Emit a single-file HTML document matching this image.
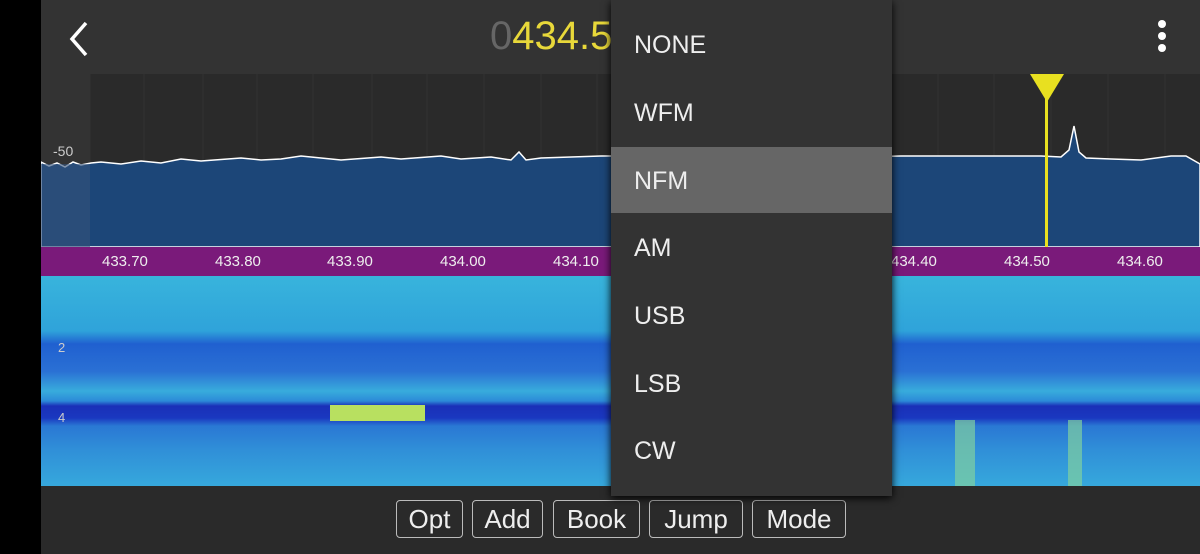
<!DOCTYPE html><html><head><style>
body{margin:0;width:1200px;height:554px;background:#000;overflow:hidden;position:relative;font-family:"Liberation Sans",sans-serif}
.a{position:absolute}
.b{position:absolute;top:500px;height:38px;border:1.5px solid #bbb;border-radius:4px;box-sizing:border-box;font-size:26px;color:#eee;text-align:center;line-height:36px}
</style></head><body>
<div class="a" style="left:41px;top:0;width:1159px;height:74px;background:#333"></div>
<svg class="a" style="left:64px;top:20px" width="30" height="38"><path d="M22 3 L8 19 L22 35" stroke="#fff" stroke-width="3.5" fill="none"/></svg>
<div class="a" style="left:490px;top:14px;font-size:40px;color:#666">0<span style="color:#e8d83a">434.5</span></div>
<div class="a" style="left:1158px;top:20px;width:8px;height:8px;border-radius:50%;background:#fff;box-shadow:0 12px 0 #fff,0 24px 0 #fff"></div>
<div class="a" style="left:41px;top:74px;width:1159px;height:173px;background:#2a2a2a"></div>
<div class="a" style="left:41px;top:74px;width:49px;height:173px;background:#333"></div>
<svg class="a" style="left:41px;top:74px" width="1159" height="173">
<g stroke="#333" stroke-width="1"><path d="M49 0V173M103 0V173M162 0V173M216 0V173M272 0V173M331 0V173M386 0V173M443 0V173M500 0V173M556 0V173M613 0V173M670 0V173M726 0V173M783 0V173M840 0V173M897 0V173M953 0V173M1010 0V173M1067 0V173M1124 0V173"/></g>
<path d="M0 88 L8 92 16 89 24 93 32 88 40 91 50 89 60 88 80 90 100 87 120 89 140 85 160 87 200 84 220 86 240 85 260 82 280 84 300 86 340 83 360 85 400 82 420 85 450 83 470 86 478 78 485 86 500 84 560 82 620 82 700 82 760 82 800 83 860 82 900 82 960 82 1000 82 1020 83 1028 76 1033 52 1038 78 1045 84 1070 85 1100 86 1130 82 1145 82 1159 90 V173 H0Z" fill="#1c4678" stroke="#fff" stroke-width="1.5"/>
<rect x="0" y="90" width="49" height="83" fill="#33527a" opacity=".6"/>
<text x="12" y="82" fill="#ccc" font-size="14" font-family="Liberation Sans">-50</text>
</svg>
<div class="a" style="left:1045px;top:78px;width:3px;height:169px;background:#e8e020"></div>
<svg class="a" style="left:1030px;top:74px" width="34" height="28"><path d="M0 0H34L17 28Z" fill="#e8e020"/></svg>
<div class="a" style="left:41px;top:247px;width:1159px;height:29px;background:#7a1a7a;color:#eee;font-size:15px;line-height:29px">
<span class="a" style="left:61px">433.70</span><span class="a" style="left:174px">433.80</span><span class="a" style="left:286px">433.90</span><span class="a" style="left:399px">434.00</span><span class="a" style="left:512px">434.10</span><span class="a" style="left:850px">434.40</span><span class="a" style="left:963px">434.50</span><span class="a" style="left:1076px">434.60</span></div>
<div class="a" style="left:41px;top:276px;width:1159px;height:210px;background:linear-gradient(#38b4dc 0,#2fa3da 55px,#2060d0 68px,#2a70d4 95px,#38acdc 115px,#2c8ad8 125px,#1a30b8 130px,#1a38c0 142px,#2a78d4 150px,#3090d8 175px,#36a8dc 210px)"></div>
<div class="a" style="left:330px;top:405px;width:95px;height:16px;background:#b8e060"></div>
<div class="a" style="left:955px;top:420px;width:20px;height:66px;background:#80d0a0;opacity:.7"></div>
<div class="a" style="left:1068px;top:420px;width:14px;height:66px;background:#80d0a0;opacity:.7"></div>
<div class="a" style="left:58px;top:340px;color:#ccc;font-size:13px">2</div>
<div class="a" style="left:58px;top:410px;color:#ccc;font-size:13px">4</div>
<div class="a" style="left:41px;top:486px;width:1159px;height:68px;background:#2a2a2a"></div>
<div class="b" style="left:396px;width:67px">Opt</div>
<div class="b" style="left:472px;width:71px">Add</div>
<div class="b" style="left:553px;width:87px">Book</div>
<div class="b" style="left:649px;width:94px">Jump</div>
<div class="b" style="left:752px;width:94px">Mode</div>
<div class="a" style="left:611px;top:0;width:281px;height:496px;background:#333;box-shadow:0 2px 8px #000;font-size:25px;color:#eee">
<div class="a" style="left:23px;top:31px">NONE</div>
<div class="a" style="left:23px;top:99px">WFM</div>
<div class="a" style="left:0;top:147px;width:281px;height:66px;background:#666"></div>
<div class="a" style="left:23px;top:167px">NFM</div>
<div class="a" style="left:23px;top:234px">AM</div>
<div class="a" style="left:23px;top:302px">USB</div>
<div class="a" style="left:23px;top:370px">LSB</div>
<div class="a" style="left:23px;top:437px">CW</div>
</div>
</body></html>
